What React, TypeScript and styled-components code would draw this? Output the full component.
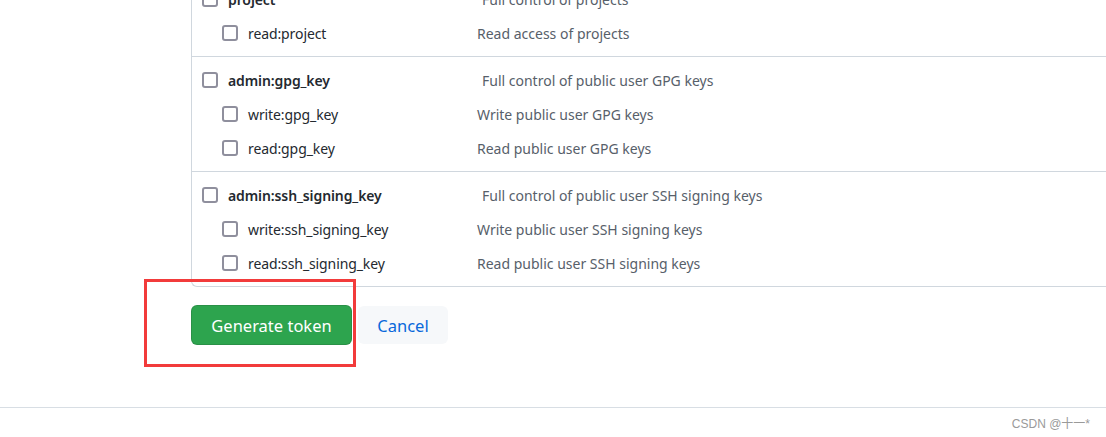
import React from "react";
import styled, { createGlobalStyle } from "styled-components";

const GlobalStyle = createGlobalStyle`
  html, body { margin: 0; padding: 0; background: #ffffff; }
  body { font-family: "Noto Sans", "Segoe UI", "Liberation Sans", sans-serif; overflow: hidden; }
  * { box-sizing: border-box; }
`;

const Page = styled.div`
  width: 1106px;
  height: 437px;
  display: flex;
  flex-direction: column;
  overflow: hidden;
  position: relative;
`;

const Main = styled.div`
  flex: 1;
  padding-left: 191px;
  display: flex;
  flex-direction: column;
`;

const ScopesPanel = styled.div`
  margin-top: -24px;
  margin-right: -40px;
  border: 1px solid #d0d7de;
  border-top: none;
  border-right: none;
  border-bottom-left-radius: 6px;
`;

const Group = styled.div<{ $last?: boolean }>`
  padding: 6px 0;
  border-bottom: ${(p) => (p.$last ? "none" : "1px solid #d0d7de")};
`;

const Row = styled.label`
  display: flex;
  align-items: center;
  height: 34px;
`;

const LabelCell = styled.div<{ $child?: boolean }>`
  width: 285px;
  display: flex;
  align-items: center;
  gap: 10px;
  padding-left: ${(p) => (p.$child ? "30px" : "10px")};
`;

const Box = styled.span`
  width: 16px;
  height: 16px;
  border: 2px solid #8f8f9d;
  border-radius: 3px;
  background: #ffffff;
  flex: none;
`;

const ScopeName = styled.span<{ $bold?: boolean }>`
  font-size: 14px;
  color: #24292f;
  font-weight: ${(p) => (p.$bold ? 600 : 400)};
  letter-spacing: -0.1px;
`;

const Description = styled.span<{ $parent?: boolean }>`
  font-size: 14px;
  color: #57606a;
  padding-left: ${(p) => (p.$parent ? "5px" : "0")};
`;

const Actions = styled.div`
  display: flex;
  gap: 6px;
  margin-top: 18px;
  position: relative;
`;

const PrimaryButton = styled.button`
  height: 40px;
  width: 161px;
  border: 1px solid rgba(27, 31, 36, 0.15);
  border-radius: 6px;
  background: #2da44e;
  color: #ffffff;
  font-family: inherit;
  font-size: 16.5px;
  cursor: pointer;
`;

const SecondaryButton = styled.button`
  height: 38px;
  margin-top: 1px;
  width: 90px;
  border: none;
  border-radius: 6px;
  background: #f6f8fa;
  color: #0969da;
  font-family: inherit;
  font-size: 16.5px;
  cursor: pointer;
`;

const Highlight = styled.div`
  position: absolute;
  left: -47px;
  top: -26px;
  width: 212px;
  height: 88px;
  border: 3px solid #f23b3b;
  pointer-events: none;
`;

const Footer = styled.footer`
  height: 30px;
  border-top: 1px solid #d8dee4;
  display: flex;
  justify-content: flex-end;
  align-items: center;
  padding-right: 16px;
`;

const Watermark = styled.span`
  font-family: "Liberation Sans", "Noto Sans CJK SC", sans-serif;
  font-size: 12px;
  color: #9a9a9a;
`;

type Scope = { name: string; desc: string };
type ScopeGroup = { parent: Scope; children: Scope[] };

const groups: ScopeGroup[] = [
  {
    parent: { name: "project", desc: "Full control of projects" },
    children: [{ name: "read:project", desc: "Read access of projects" }],
  },
  {
    parent: { name: "admin:gpg_key", desc: "Full control of public user GPG keys" },
    children: [
      { name: "write:gpg_key", desc: "Write public user GPG keys" },
      { name: "read:gpg_key", desc: "Read public user GPG keys" },
    ],
  },
  {
    parent: { name: "admin:ssh_signing_key", desc: "Full control of public user SSH signing keys" },
    children: [
      { name: "write:ssh_signing_key", desc: "Write public user SSH signing keys" },
      { name: "read:ssh_signing_key", desc: "Read public user SSH signing keys" },
    ],
  },
];

export default function App() {
  return (
    <>
      <GlobalStyle />
      <Page>
        <Main>
          <ScopesPanel>
            {groups.map((g, i) => (
              <Group key={g.parent.name} $last={i === groups.length - 1}>
                <Row>
                  <LabelCell>
                    <Box />
                    <ScopeName $bold>{g.parent.name}</ScopeName>
                  </LabelCell>
                  <Description $parent>{g.parent.desc}</Description>
                </Row>
                {g.children.map((c) => (
                  <Row key={c.name}>
                    <LabelCell $child>
                      <Box />
                      <ScopeName>{c.name}</ScopeName>
                    </LabelCell>
                    <Description>{c.desc}</Description>
                  </Row>
                ))}
              </Group>
            ))}
          </ScopesPanel>
          <Actions>
            <Highlight />
            <PrimaryButton>Generate token</PrimaryButton>
            <SecondaryButton>Cancel</SecondaryButton>
          </Actions>
        </Main>
        <Footer>
          <Watermark>CSDN @十一*</Watermark>
        </Footer>
      </Page>
    </>
  );
}
